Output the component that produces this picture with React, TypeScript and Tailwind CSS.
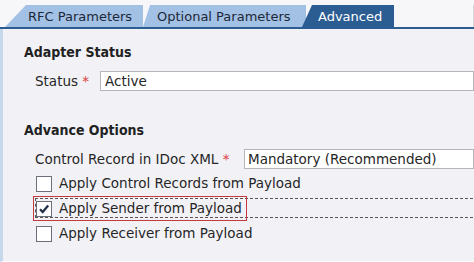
import React from "react";

const font = { fontFamily: '"DejaVu Sans", Verdana, sans-serif' };
const headFont = { fontFamily: '"DejaVu Sans Condensed", "DejaVu Sans", sans-serif' };

function Tab({
  label,
  active,
  className,
}: {
  label: string;
  active?: boolean;
  className: string;
}) {
  return (
    <div
      className={`h-[22px] flex items-center text-[13px] leading-none ${
        active ? "bg-[#2c5d92] text-white" : "bg-[#a3c1e4] text-[#1c2838]"
      } ${className}`}
    >
      {label}
    </div>
  );
}

function Checkbox({ checked }: { checked?: boolean }) {
  return (
    <span className="w-[16px] h-[16px] border border-[#6b6f78] bg-white flex items-center justify-center shrink-0">
      {checked && (
        <svg width="12" height="12" viewBox="0 0 12 12">
          <path d="M2 6.2 L4.7 9 L10.2 2.6" fill="none" stroke="#23304a" strokeWidth="2.3" />
        </svg>
      )}
    </span>
  );
}

export default function App() {
  return (
    <div className="w-[474px] h-[262px] overflow-hidden bg-[#f7f7f9] flex flex-col text-[#262626]" style={font}>
      {/* Tabs */}
      <div className="h-[29px] shrink-0 flex items-end pl-[5px] border-b-2 border-[#2c5d92]">
        <Tab
          label="RFC Parameters"
          className="w-[138px] pl-[23px] [clip-path:polygon(21px_0,100%_0,100%_100%,0_100%)]"
        />
        <Tab
          label="Optional Parameters"
          className="w-[163px] pl-[14px] [clip-path:polygon(7px_0,100%_0,100%_100%,0_100%)]"
        />
        <Tab
          label="Advanced"
          active
          className="-ml-[4px] w-[92px] pl-[16px] [clip-path:polygon(10px_0,100%_0,100%_100%,0_100%)]"
        />
        <div className="flex-1 h-[22px] border-r border-[#d6d8de]" />
      </div>

      {/* Content */}
      <div className="flex-1 bg-[#f2f2f6] border-l-[3px] border-[#c8d8eb] border-b border-b-white pl-[21px] pt-[13px] text-[13.5px]">
        <div className="h-[20px] leading-[20px] font-bold text-[14px] text-[#222]" style={headFont}>
          Adapter Status
        </div>
        <div className="mt-[9px] h-[20px] flex items-center">
          <div className="w-[76px] pl-[11px] shrink-0">
            Status <span className="text-[#e0403f]">*</span>
          </div>
          <div className="flex-1 h-[20px] bg-white border border-[#b4b6bc] pl-[4px] flex items-center">
            Active
          </div>
        </div>

        <div className="mt-[29px] h-[20px] leading-[20px] font-bold text-[14px] text-[#222]" style={headFont}>
          Advance Options
        </div>
        <div className="mt-[9px] h-[20px] flex items-center">
          <div className="w-[220px] pl-[11px] shrink-0">
            Control Record in IDoc XML <span className="text-[#e0403f]">*</span>
          </div>
          <div className="flex-1 h-[20px] bg-white border border-[#b4b6bc] pl-[3px] flex items-center">
            Mandatory (Recommended)
          </div>
        </div>

        <div className="mt-[2px]">
          <div className="h-[25px] flex items-center gap-[7px] pl-[12px]">
            <Checkbox />
            <span>Apply Control Records from Payload</span>
          </div>
          <div className="relative h-[25px] flex items-center gap-[7px] pl-[12px]">
            <div className="absolute left-[11px] -right-[4px] top-[2px] bottom-[3px] border border-dashed border-[#555]" />
            <div className="absolute left-[9px] w-[214px] top-0 bottom-0 border border-[#c33b3f]" />
            <Checkbox checked />
            <span>Apply Sender from Payload</span>
          </div>
          <div className="h-[25px] flex items-center gap-[7px] pl-[12px]">
            <Checkbox />
            <span>Apply Receiver from Payload</span>
          </div>
        </div>
      </div>
    </div>
  );
}
